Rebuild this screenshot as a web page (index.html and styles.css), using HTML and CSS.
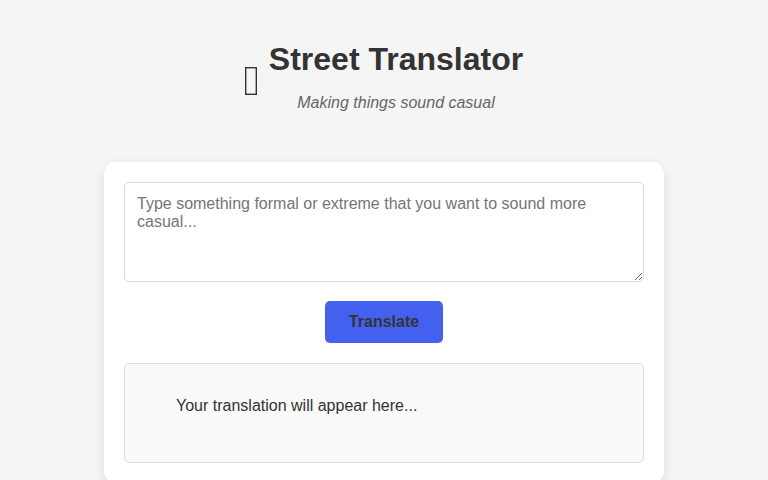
FILE: index.html
```html
<!DOCTYPE html>
<html lang="en">
<head>
    <meta charset="UTF-8">
    <meta name="viewport" content="width=device-width, initial-scale=1.0">
    <title>Street Translator</title>
    <link rel="stylesheet" href="styles.css">
</head>
<body>
    <header class="page-header">
        <!-- missing-glyph box -->
        <svg class="logo" width="12" height="28" viewBox="0 0 12 28" aria-hidden="true">
            <rect x="0.7" y="0.7" width="10.6" height="26.6" fill="none" stroke="#333" stroke-width="1.4"/>
        </svg>
        <div class="titles">
            <h1>Street Translator</h1>
            <p class="tagline">Making things sound casual</p>
        </div>
    </header>

    <main class="card">
        <textarea class="input-text" placeholder="Type something formal or extreme that you want to sound more casual..."></textarea>
        <button class="translate-button">Translate</button>
        <div class="result">
            <p>Your translation will appear here...</p>
        </div>
    </main>
</body>
</html>
```

FILE: styles.css
```css
* {
    box-sizing: border-box;
}

body {
    margin: 0;
    height: 480px;
    overflow: hidden;
    background-color: #f5f5f5;
    color: #333;
    font-family: "Liberation Sans", Arial, sans-serif;
}

/* header */
.page-header {
    display: flex;
    justify-content: center;
    align-items: center;
    height: 162px;
    padding-top: 30px;
    padding-bottom: 40px;
}

.logo {
    margin-top: 10px;
    margin-right: 12px;
}

.titles {
    text-align: center;
}

h1 {
    margin: 0 0 16px;
    font-size: 32px;
    line-height: 37px;
}

.tagline {
    margin: 0;
    color: #666;
    font-size: 16px;
    font-style: italic;
}

/* main card */
.card {
    display: flex;
    flex-direction: column;
    align-items: center;
    width: 560px;
    margin: 0 auto;
    padding: 20px;
    background-color: #fff;
    border-radius: 12px;
    box-shadow: 0 4px 12px rgba(0, 0, 0, 0.1);
}

.input-text {
    display: block;
    width: 100%;
    height: 100px;
    padding: 12px;
    border: 1px solid #ddd;
    border-radius: 5px;
    font-family: inherit;
    font-size: 16px;
}

.translate-button {
    margin: 19px 0 20px;
    padding: 12px 24px;
    border: none;
    border-radius: 5px;
    background-color: #4361ee;
    color: #333;
    font-family: inherit;
    font-size: 16px;
    font-weight: bold;
}

.result {
    width: 100%;
    height: 100px;
    padding: 33px 51px;
    background-color: #f9f9f9;
    border: 1px solid #ddd;
    border-radius: 5px;
}

.result p {
    margin: 0;
    font-size: 16px;
}
```
